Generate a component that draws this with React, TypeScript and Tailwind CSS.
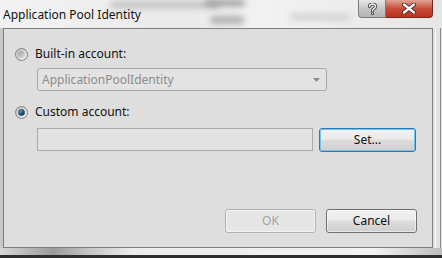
import React from 'react'

const font = { fontFamily: '"Noto Sans", "Open Sans", "Liberation Sans", sans-serif' }

function Radio({ checked }: { checked?: boolean }) {
  return (
    <div className="flex h-[13px] w-[13px] items-center justify-center rounded-full border border-[#808080] bg-gradient-to-br from-[#bdbdbd] to-[#f4f4f4]">
      {checked ? (
        <div className="h-[7px] w-[7px] rounded-full border border-[#1c3f5a] bg-gradient-to-br from-[#8ec0dd] via-[#2c6a93] to-[#0f2e48]" />
      ) : (
        <div className="h-[7px] w-[7px] rounded-full bg-gradient-to-br from-[#9c9c9c] to-[#e0e0e0]" />
      )}
    </div>
  )
}

function Button({ label, disabled, focused, className = '' }: { label: string; disabled?: boolean; focused?: boolean; className?: string }) {
  const border = disabled ? 'border-[#b2b2b2]' : focused ? 'border-[#2f78ad]' : 'border-[#707070]'
  const bg = disabled
    ? 'bg-[#e6e6e6]'
    : 'bg-[linear-gradient(#f2f2f2_0%,#ebebeb_45%,#dddddd_50%,#cfcfcf_100%)]'
  return (
    <div className={`flex h-[24px] items-center justify-center rounded-[3px] border ${border} ${bg} ${className}`}>
      <div className={`flex h-full w-full items-center justify-center rounded-[2px] border ${focused ? 'border-[#6fc6ea]' : 'border-white/50'} text-[12px] ${disabled ? 'text-[#a3a3a3]' : 'text-[#111111]'}`}>
        {label}
      </div>
    </div>
  )
}

export default function App() {
  return (
    <div style={font} className="flex h-[258px] w-[442px] flex-col overflow-hidden bg-[#e9e9e9]">
      {/* title bar */}
      <div className="relative flex h-[28px] items-start bg-[linear-gradient(90deg,#f3f3f3,#eaeaea_40%,#f2f2f2_60%,#e6e6e6)]">
        <div className="absolute left-[110px] top-[2px] h-[6px] w-[110px] rounded-full bg-[#bdbdbd] blur-[3px]" />
        <div className="absolute left-[205px] top-[0px] h-[6px] w-[40px] rounded-full bg-[#9a9a9a] blur-[3px]" />
        <div className="absolute left-[210px] top-[16px] h-[8px] w-[34px] rounded-full bg-[#b0b0b0] blur-[3px]" />
        <div className="absolute left-[290px] top-[14px] h-[6px] w-[60px] rounded-full bg-[#d0d0d0] blur-[3px]" />
        <span className="relative mt-[6px] pl-[3px] text-[12px] text-[#111111]">Application Pool Identity</span>
        <div className="relative ml-auto mr-[9px] flex">
          <div className="flex h-[18px] w-[28px] items-center justify-center rounded-bl-[4px] border border-t-0 border-[#7a7a7a] bg-[linear-gradient(#e8e8e8,#c6c6c6_50%,#b4b4b4)]">
            <svg width="9" height="12" viewBox="0 0 9 12">
              <path d="M1.5 3.5 Q1.5 1 4.5 1 Q7.5 1 7.5 3.5 Q7.5 5 5.5 6 Q4.5 6.6 4.5 8 M4.5 10.5 V10.6" stroke="#3a3a3a" strokeWidth="3" fill="none" strokeLinecap="round" />
              <path d="M1.5 3.5 Q1.5 1 4.5 1 Q7.5 1 7.5 3.5 Q7.5 5 5.5 6 Q4.5 6.6 4.5 8 M4.5 10.5 V10.6" stroke="#f2f2f2" strokeWidth="1.4" fill="none" strokeLinecap="round" />
            </svg>
          </div>
          <div className="flex h-[18px] w-[47px] items-center justify-center rounded-br-[4px] border border-l-0 border-t-0 border-[#6b2a22] bg-[linear-gradient(#e0a496,#c74d3a_50%,#b8321f)]">
            <svg width="14" height="11" viewBox="0 0 14 11">
              <path d="M2 1.5 L12 9.5 M12 1.5 L2 9.5" stroke="#3a1410" strokeWidth="4" strokeLinecap="round" />
              <path d="M2 1.5 L12 9.5 M12 1.5 L2 9.5" stroke="#ffffff" strokeWidth="2.4" strokeLinecap="round" />
            </svg>
          </div>
        </div>
      </div>

      {/* client area */}
      <div className="flex flex-1 border-l-[3px] border-l-[#c8c8c8]">
        <div className="flex flex-1 flex-col border border-[#7f7f7f] bg-[#dedede] pl-[11px] text-[12px] text-[#111111]">
          <div className="mt-[17px] flex h-[16px] items-center gap-[7px]">
            <Radio />
            <span>Built-in account:</span>
          </div>
          <div className="ml-[22px] mt-[6px] flex h-[23px] w-[290px] items-center justify-between rounded-[3px] border border-[#a7a7a7] bg-[#e3e3e3] pl-[4px] pr-[6px] text-[#8d8d8d]">
            <span>ApplicationPoolIdentity</span>
            <svg width="7" height="4" viewBox="0 0 7 4">
              <path d="M0 0 H7 L3.5 4 Z" fill="#8a8a8a" />
            </svg>
          </div>
          <div className="mt-[13px] flex h-[16px] items-center gap-[7px]">
            <Radio checked />
            <span>Custom account:</span>
          </div>
          <div className="ml-[22px] mt-[8px] flex items-start">
            <div className="h-[23px] w-[276px] border border-[#ababab] bg-[#e2e2e2]" />
            <Button label="Set..." focused className="ml-[6px] w-[97px]" />
          </div>
          <div className="mt-auto flex justify-end gap-[10px] pb-[14px] pr-[15px]">
            <Button label="OK" disabled className="w-[91px]" />
            <Button label="Cancel" className="w-[91px]" />
          </div>
        </div>
        <div className="flex w-[9px] bg-[#e2e2e2]">
          <div className="ml-[2px] w-[1px] bg-[#fafafa]" />
          <div className="ml-auto mr-[1px] w-[1px] bg-[#8c8c8c]" />
        </div>
      </div>

      {/* bottom frame */}
      <div className="relative h-[7px] bg-[linear-gradient(90deg,#d8d8d8,#9a9a9a_12%,#c4c4c4_20%,#ededed_30%,#f2f2f2_85%,#bcbcbc)]" />
      <div className="h-[3px] bg-[#2e2e2e]" />
    </div>
  )
}
